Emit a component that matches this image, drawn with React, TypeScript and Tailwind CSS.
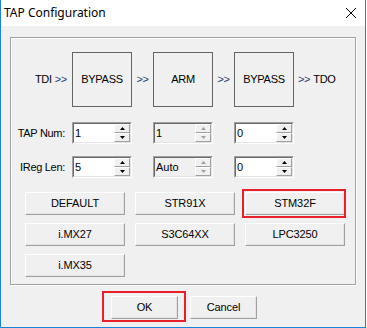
import React from "react";

const font = { fontFamily: '"Liberation Sans", Arial, sans-serif' };

function Arrow({ up, disabled }: { up: boolean; disabled?: boolean }) {
  return (
    <svg width="5" height="3" viewBox="0 0 5 3" className="block">
      <polygon
        points={up ? "2.5,0 5,3 0,3" : "0,0 5,0 2.5,3"}
        fill={disabled ? "#a0a0a0" : "#000"}
      />
    </svg>
  );
}

function SpinBtn({ up, disabled }: { up: boolean; disabled?: boolean }) {
  return (
    <div className="h-[9px] w-[16px] bg-[#f0f0f0] border-t border-l border-t-white border-l-white border-b border-r border-b-[#a0a0a0] border-r-[#a0a0a0] flex items-center justify-center">
      <Arrow up={up} disabled={disabled} />
    </div>
  );
}

function Spin({ value, disabled }: { value: string; disabled?: boolean }) {
  return (
    <div className="w-[60px] h-[22px] border-t border-l border-t-[#a0a0a0] border-l-[#a0a0a0] border-b border-r border-b-white border-r-white">
      <div
        className={`w-full h-full border-t border-l border-t-[#696969] border-l-[#696969] border-b border-r border-b-[#e3e3e3] border-r-[#e3e3e3] flex items-center justify-between ${
          disabled ? "bg-[#f0f0f0]" : "bg-white"
        }`}
      >
        <span className="pl-[1px] text-[11px] leading-none text-black">{value}</span>
        <div className="flex flex-col justify-center gap-0">
          <SpinBtn up disabled={disabled} />
          <SpinBtn up={false} disabled={disabled} />
        </div>
      </div>
    </div>
  );
}

function Btn({ label, w = "w-[100px]" }: { label: string; w?: string }) {
  return (
    <div
      className={`${w} h-[23px] bg-[#f0f0f0] border-t border-l border-t-white border-l-white border-b border-r border-b-[#a0a0a0] border-r-[#a0a0a0] shadow-[inset_-1px_-1px_0_#e3e3e3] flex items-center justify-center text-[11px] tracking-[-0.1px] text-black`}
    >
      {label}
    </div>
  );
}

function ChainBox({ label }: { label: string }) {
  return (
    <div className="w-[60px] h-[55px] border border-[#646464] flex items-center justify-center text-[11px] tracking-[-0.3px] text-black">
      {label}
    </div>
  );
}

function Sep() {
  return (
    <div className="w-[21px] flex items-center justify-center text-[11px] tracking-[-0.4px] text-[#1f3f73]">
      &gt;&gt;
    </div>
  );
}

export default function App() {
  return (
    <div className="w-[367px] h-[328px] bg-white" style={font}>
      <div className="relative w-[366px] h-[328px] bg-[#f0f0f0] border-l border-r border-b border-[#1883d7] flex flex-col">
        <div className="h-[26px] bg-white flex items-center justify-between pl-[3px] pr-[8px]">
          <span
            className="text-[12px] text-black"
            style={{ fontFamily: '"Noto Sans", "Open Sans", sans-serif' }}
          >
            TAP Configuration
          </span>
          <svg width="12" height="12" viewBox="0 0 12 12">
            <path d="M1 1 L11 11 M11 1 L1 11" stroke="#000" strokeWidth="1" />
          </svg>
        </div>

        <div className="ml-[9px] mt-[11px] w-[346px] h-[248px] border border-[#a0a0a0] shadow-[inset_1px_1px_0_#fff,1px_1px_0_#fff] flex flex-col">
          <div className="mt-[14px] flex h-[55px]">
            <div className="w-[61px] pr-[5px] flex items-center justify-end text-[11px] tracking-[-0.3px] text-black">
              TDI<span className="text-[#1f3f73] ml-[3px]">&gt;&gt;</span>
            </div>
            <ChainBox label="BYPASS" />
            <Sep />
            <ChainBox label="ARM" />
            <Sep />
            <ChainBox label="BYPASS" />
            <div className="ml-[4px] flex items-center text-[11px] tracking-[-0.3px] text-black">
              <span className="text-[#1f3f73] mr-[3px]">&gt;&gt;</span>TDO
            </div>
          </div>

          <div className="mt-[15px] flex h-[22px] items-center">
            <div className="w-[61px] pr-[7px] text-right text-[11px] tracking-[-0.3px] text-black">TAP Num:</div>
            <Spin value="1" />
            <div className="w-[21px]" />
            <Spin value="1" disabled />
            <div className="w-[21px]" />
            <Spin value="0" />
          </div>

          <div className="mt-[12px] flex h-[22px] items-center">
            <div className="w-[61px] pr-[7px] text-right text-[11px] tracking-[-0.3px] text-black">IReg Len:</div>
            <Spin value="5" />
            <div className="w-[21px]" />
            <Spin value="Auto" disabled />
            <div className="w-[21px]" />
            <Spin value="0" />
          </div>

          <div className="mt-[14px] ml-[14px] grid grid-cols-[100px_100px_100px] gap-x-[10px] gap-y-[8px]">
            <Btn label="DEFAULT" />
            <Btn label="STR91X" />
            <Btn label="STM32F" />
            <Btn label="i.MX27" />
            <Btn label="S3C64XX" />
            <Btn label="LPC3250" />
            <Btn label="i.MX35" />
          </div>
        </div>

        <div className="mt-[11px] ml-[110px] flex gap-[12px]">
          <Btn label="OK" w="w-[67px]" />
          <Btn label="Cancel" w="w-[67px]" />
        </div>

        <div className="absolute left-[241px] top-[189px] w-[104px] h-[29px] border-2 border-[#e8202a]" />
        <div className="absolute left-[101px] top-[291px] w-[84px] h-[31px] border-2 border-[#e8202a]" />
      </div>
    </div>
  );
}
